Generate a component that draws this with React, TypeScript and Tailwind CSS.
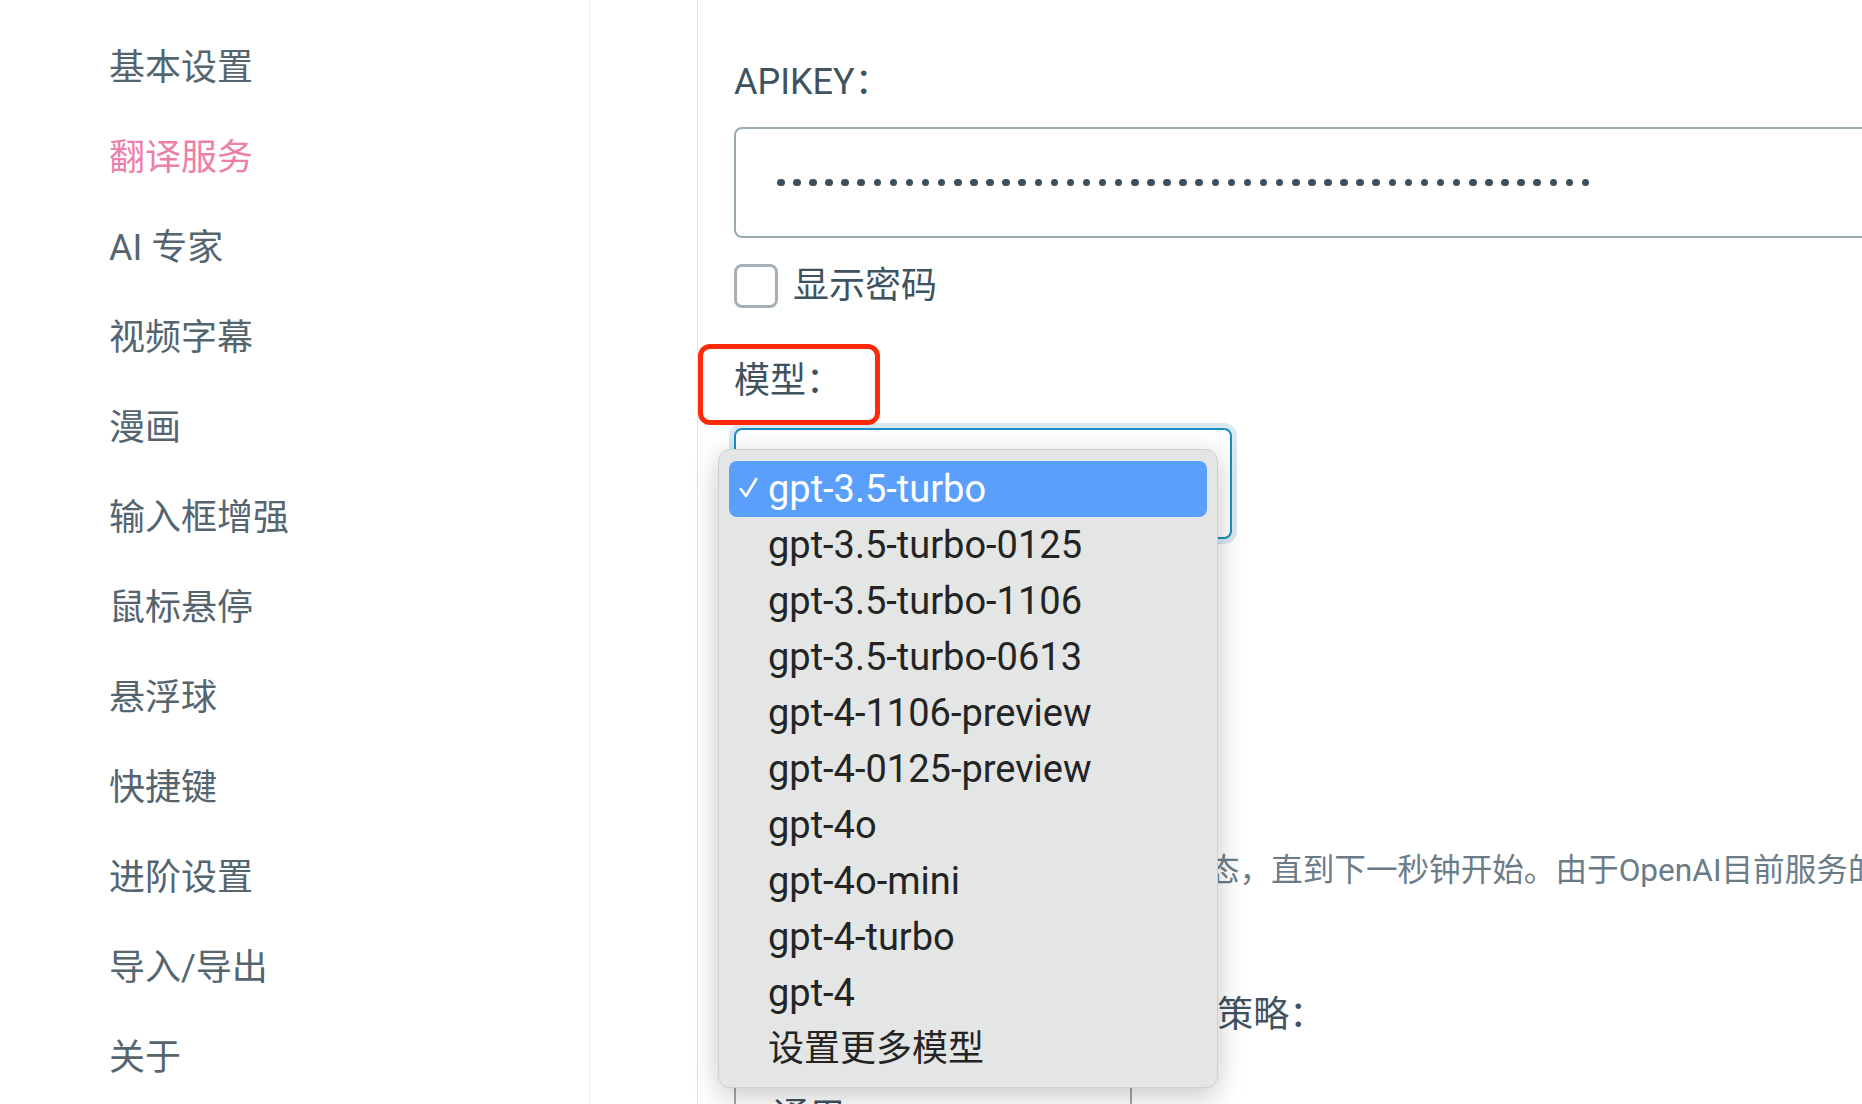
const NAV_ITEMS = [
  '基本设置',
  '翻译服务',
  'AI 专家',
  '视频字幕',
  '漫画',
  '输入框增强',
  '鼠标悬停',
  '悬浮球',
  '快捷键',
  '进阶设置',
  '导入/导出',
  '关于',
];

const MODELS = [
  'gpt-3.5-turbo',
  'gpt-3.5-turbo-0125',
  'gpt-3.5-turbo-1106',
  'gpt-3.5-turbo-0613',
  'gpt-4-1106-preview',
  'gpt-4-0125-preview',
  'gpt-4o',
  'gpt-4o-mini',
  'gpt-4-turbo',
  'gpt-4',
];

const ACTIVE = '翻译服务';

function Sidebar() {
  return (
    <aside className="w-[590px] shrink-0 border-r border-[#ececec] pt-[23px] pl-[109px]">
      {NAV_ITEMS.map((item) => (
        <div
          key={item}
          className={
            item === ACTIVE
              ? 'flex h-[90px] items-center text-[36px] text-[#ee7fa8]'
              : 'flex h-[90px] items-center text-[36px] text-[#546570]'
          }
        >
          {item}
        </div>
      ))}
    </aside>
  );
}

function Label({ children }: { children: React.ReactNode }) {
  return <div className="h-[44px] whitespace-nowrap text-[36px] leading-[44px] text-[#3f5260]">{children}</div>;
}

function ModelMenu() {
  return (
    <div className="absolute left-[718px] top-[449px] w-[500px] rounded-[12px] border border-[#cfd0d0] bg-[#e4e5e5] px-[10px] pt-[11px] pb-[10px] shadow-[0_8px_28px_rgba(0,0,0,0.22)]">
      {MODELS.map((m, i) => (
        <div
          key={m}
          className={
            i === 0
              ? 'relative flex h-[56px] items-center rounded-[8px] bg-[#5a9ffc] pl-[39px] text-[38px] text-white'
              : 'flex h-[56px] items-center pl-[39px] text-[38px] text-[#242424]'
          }
        >
          {i === 0 && (
            <svg className="absolute left-[10px] top-[16px] h-[21px] w-[19px]" viewBox="0 0 19 21" fill="none">
              <path d="M1.8 12 L7 19 L17.2 2" stroke="white" strokeWidth="2.6" strokeLinecap="round" strokeLinejoin="round" />
            </svg>
          )}
          {m}
        </div>
      ))}
      <div className="flex h-[56px] items-center pl-[39px] text-[36px] text-[#242424]">设置更多模型</div>
    </div>
  );
}

export default function App() {
  return (
    <div className="relative flex h-[1104px] w-[1862px] overflow-hidden bg-white font-[Roboto,'Noto_Sans_CJK_SC',sans-serif]">
      <Sidebar />

      <main className="ml-[107px] flex-1 overflow-hidden border-l border-[#e4e4e4] pl-[36px] pt-[60px]">
        <Label>APIKEY：</Label>
        <div className="mt-[23px] flex h-[111px] w-[1300px] items-center rounded-[8px] border-2 border-[#9ba9b3] pl-[41px]">
          <div className="flex gap-[8.6px]">
            {Array.from({ length: 51 }).map((_, i) => (
              <span key={i} className="h-[7.5px] w-[7.5px] rounded-full bg-[#3e505d]" />
            ))}
          </div>
        </div>

        <label className="mt-[26px] flex h-[44px] items-center gap-[15px]">
          <span className="h-[44px] w-[44px] rounded-[8px] border-[3px] border-[#a5b1b9] bg-white" />
          <span className="text-[36px] leading-[44px] text-[#3f5260]">显示密码</span>
        </label>

        <div className="mt-[51px]">
          <Label>模型：</Label>
        </div>
        <div className="mt-[25px] h-[111px] w-[498px] rounded-[8px] border-2 border-[#1a8fbf] bg-white ring-[5px] ring-[#d8e9f3]" />

        <div className="mt-[49px]">
          <Label>每秒最大请求数：</Label>
        </div>
        <div className="mt-[24px] h-[111px] w-[398px] rounded-[8px] border-2 border-[#9ba9b3]" />

        <div className="mt-[84px] h-[40px] whitespace-nowrap text-[31.6px] leading-[40px] text-[#6b7c88]">
          请求数超过该限制时会进入排队状态，直到下一秒钟开始。由于OpenAI目前服务的各种限制，请点击这里查看最新建议的数值。
        </div>

        <div className="mt-[102px]">
          <Label>请求超出 AI 服务限制时的重试策略：</Label>
        </div>
        <div className="mt-[24px] flex h-[111px] w-[398px] items-center rounded-[8px] border-2 border-[#9ba9b3] pl-[37px] text-[36px] text-[#3f5260]">
          通用
        </div>
      </main>

      {/* annotation around the model label */}
      <div className="pointer-events-none absolute left-[698px] top-[344px] h-[81px] w-[182px] rounded-[12px] border-[5px] border-[#ff2a0a]" />

      <ModelMenu />
    </div>
  );
}
